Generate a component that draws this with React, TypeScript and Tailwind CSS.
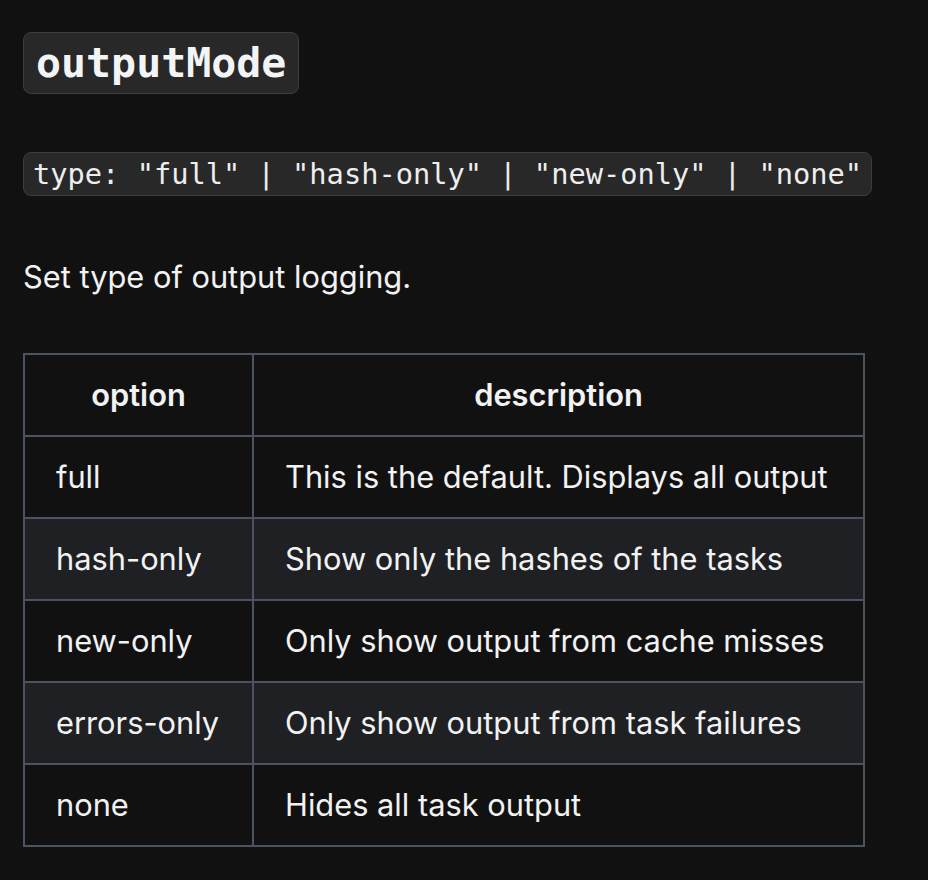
const rows = [
  { option: "full", description: "This is the default. Displays all output" },
  { option: "hash-only", description: "Show only the hashes of the tasks" },
  { option: "new-only", description: "Only show output from cache misses" },
  { option: "errors-only", description: "Only show output from task failures" },
  { option: "none", description: "Hides all task output" },
];

const mono = "font-['DejaVu_Sans_Mono',monospace]";

export default function App() {
  return (
    <main className="min-h-[880px] w-full bg-[#111111] px-[23px] pt-[32px] font-['Inter',sans-serif] text-[#f2f2f2]">
      <h2>
        <code
          className={`${mono} inline-block rounded-[8px] border border-[#3d3d3d] bg-[#282828] px-[12px] text-[41.6px] font-bold leading-[60px] text-[#f3f4f6]`}
        >
          outputMode
        </code>
      </h2>

      <div className="mt-[58px]">
        <code
          className={`${mono} inline-block rounded-[8px] border border-[#3d3d3d] bg-[#282828] px-[9px] text-[28.7px] leading-[42px] text-[#eeeeee]`}
        >
          type: "full" | "hash-only" | "new-only" | "none"
        </code>
      </div>

      <p className="mt-[57px] text-[30.8px] leading-[48px]">Set type of output logging.</p>

      <table className="mt-[52px] border-collapse text-[30.8px]">
        <thead>
          <tr>
            <th className="w-[229px] border-2 border-[#4b5260] py-[16px] text-center font-semibold leading-[48px]">
              option
            </th>
            <th className="w-[611px] border-2 border-[#4b5260] py-[16px] text-center font-semibold leading-[48px]">
              description
            </th>
          </tr>
        </thead>
        <tbody>
          {rows.map((r, i) => (
            <tr key={r.option} className={i % 2 === 1 ? "bg-[#1f2023]" : "bg-[#111111]"}>
              <td className="border-2 border-[#4b5260] py-[16px] pl-[31px] pr-[20px] leading-[48px]">{r.option}</td>
              <td className="border-2 border-[#4b5260] py-[16px] pl-[31px] pr-[20px] leading-[48px]">
                {r.description}
              </td>
            </tr>
          ))}
        </tbody>
      </table>
    </main>
  );
}
